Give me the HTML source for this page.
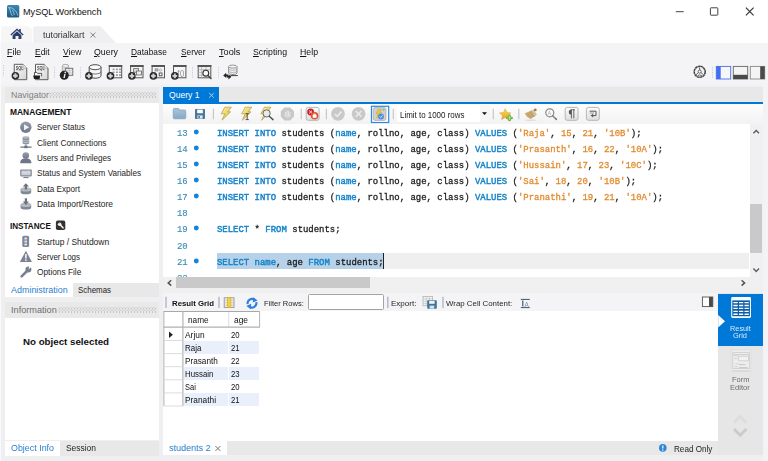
<!DOCTYPE html>
<html lang="en"><head><meta charset="utf-8"><title>MySQL Workbench</title>
<style>
*{margin:0;padding:0;box-sizing:border-box}
html,body{width:768px;height:461px;overflow:hidden;background:#efeff1}
body{position:relative;font-family:"Liberation Sans",sans-serif}
.b{position:absolute}
.t{position:absolute;white-space:pre;line-height:14px;transform-origin:0 50%}
.s{font-family:"Liberation Sans",sans-serif}
.m{font-family:"Liberation Mono",monospace}
svg{position:absolute;overflow:visible;will-change:transform}

.k{color:#1384c9;-webkit-text-stroke:0.45px}
u{text-decoration:underline;text-underline-offset:1.2px;text-decoration-thickness:0.8px}
</style></head><body>
<svg width="0" height="0" style="left:0;top:0"><defs>
<linearGradient id="gApp" x1="0" y1="0" x2="0" y2="1"><stop offset="0" stop-color="#3b88b6"/><stop offset="1" stop-color="#1a5880"/></linearGradient>
<linearGradient id="gPage" x1="0" y1="0" x2="1" y2="1"><stop offset="0" stop-color="#ffffff"/><stop offset="1" stop-color="#d4d4d4"/></linearGradient>
<linearGradient id="gBtn" x1="0" y1="0" x2="0" y2="1"><stop offset="0" stop-color="#fcfcfc"/><stop offset="1" stop-color="#dedede"/></linearGradient>
<linearGradient id="gFold" x1="0" y1="0" x2="0" y2="1"><stop offset="0" stop-color="#a9c4da"/><stop offset="1" stop-color="#86a9c6"/></linearGradient>
<linearGradient id="gBolt" x1="0" y1="0" x2="1" y2="1"><stop offset="0" stop-color="#fbf4bd"/><stop offset="0.5" stop-color="#ecd566"/><stop offset="1" stop-color="#c2a03a"/></linearGradient>
<linearGradient id="gStar" x1="0" y1="0" x2="0" y2="1"><stop offset="0" stop-color="#f6dc62"/><stop offset="1" stop-color="#e9a01e"/></linearGradient>
<linearGradient id="gGray" x1="0" y1="0" x2="0" y2="1"><stop offset="0" stop-color="#969dac"/><stop offset="1" stop-color="#70788a"/></linearGradient>
<linearGradient id="gTb" x1="0" y1="0" x2="0" y2="1"><stop offset="0" stop-color="#fdfdfd"/><stop offset="1" stop-color="#f1f1f1"/></linearGradient>
</defs></svg>
<div class="b" style="left:0px;top:0px;width:768px;height:43px;background:#fff;"></div>
<div class="b" style="left:0px;top:43px;width:768px;height:40px;background:#f4f4f6;"></div>
<div class="b" style="left:0px;top:83px;width:768px;height:5px;background:linear-gradient(#f4f4f6,#efeff1);"></div>
<div class="b" style="left:0px;top:43.5px;width:1.2px;height:418px;background:#fafafb;"></div>
<div class="b" style="left:762.8px;top:83px;width:6px;height:378px;background:#f3f3f5;"></div>
<svg style="left:7.1px;top:5.2px;" width="12.3" height="12.6" viewBox="0 0 12.3 12.6"><rect x="0" y="0" width="12.3" height="12.6" rx="1.6" fill="url(#gApp)"/><path d="M1.6 2.6 C5.5 2.2 9.3 5.2 10.8 10.2 M2.4 3.2 C3.4 5.6 3.6 8.6 5.2 10.6 M5.6 5.2 C6.6 6.6 7 8.4 7.2 9.8" fill="none" stroke="#cfe3f0" stroke-width="0.8" stroke-linecap="round" opacity="0.85"/></svg>
<span class="t s" style="left:23px;top:5.00px;font-size:9.6px;color:#111;transform:scaleX(0.9497);">MySQL Workbench</span>
<svg style="left:672px;top:4px;" width="90" height="16" viewBox="0 0 90 16"><path d="M3.8 7.7 H11.7" stroke="#444" stroke-width="1"/><rect x="38.4" y="3.8" width="7.4" height="7.4" rx="0.6" fill="none" stroke="#444" stroke-width="1"/><path d="M73.9 3.7 L81.6 11.4 M81.6 3.7 L73.9 11.4" stroke="#333" stroke-width="1.15"/></svg>
<svg style="left:0px;top:0px;" width="768" height="461" viewBox="0 0 768 461"><path d="M1.2 43 V28 Q1.2 26.3 2.9 26.3 H27.5 Q29 26.3 30 27.3 L32.2 29.6 V43 Z" fill="#f6f6f7"/><path d="M33.2 43 V28 Q33.2 26.3 34.9 26.3 H99.5 Q100.8 26.3 101.8 27.4 L116 43 Z" fill="#efeff1"/><path d="M10.4 34.6 L17 28.4 L19.2 30.4 V29 H20.8 V31.9 L23.6 34.6 L22.7 35.6 L17 30.3 L11.3 35.6 Z M12.6 35.2 L17 31.2 L21.4 35.2 V39 H18.5 V36 H15.5 V39 H12.6 Z" fill="#2b3d6b"/><path d="M90.4 32.6 L95.4 37.6 M95.4 32.6 L90.4 37.6" stroke="#777" stroke-width="0.9"/></svg>
<span class="t s" style="left:43px;top:28.00px;font-size:9.3px;color:#333;transform:scaleX(0.9561);">tutorialkart</span>
<span class="t s" style="left:7px;top:45.00px;font-size:9.6px;color:#111;transform:scaleX(0.9235);"><u>F</u>ile</span>
<span class="t s" style="left:34.5px;top:45.00px;font-size:9.6px;color:#111;transform:scaleX(0.8823);"><u>E</u>dit</span>
<span class="t s" style="left:63px;top:45.00px;font-size:9.6px;color:#111;transform:scaleX(0.8914);"><u>V</u>iew</span>
<span class="t s" style="left:94px;top:45.00px;font-size:9.6px;color:#111;transform:scaleX(0.9181);"><u>Q</u>uery</span>
<span class="t s" style="left:131.3px;top:45.00px;font-size:9.6px;color:#111;transform:scaleX(0.8715);"><u>D</u>atabase</span>
<span class="t s" style="left:180.5px;top:45.00px;font-size:9.6px;color:#111;transform:scaleX(0.8668);"><u>S</u>erver</span>
<span class="t s" style="left:219.3px;top:45.00px;font-size:9.6px;color:#111;transform:scaleX(0.9506);"><u>T</u>ools</span>
<span class="t s" style="left:253px;top:45.00px;font-size:9.6px;color:#111;transform:scaleX(0.9105);"><u>S</u>cripting</span>
<span class="t s" style="left:300px;top:45.00px;font-size:9.6px;color:#111;transform:scaleX(0.9114);"><u>H</u>elp</span>
<svg style="left:2.8px;top:65px;" width="1" height="10.5" viewBox="0 0 1 10.5"><path d="M0.5 0 V10.5" stroke="#c3cee0" stroke-width="1" stroke-dasharray="1.2 1.2"/></svg>
<svg style="left:0px;top:0px;" width="768" height="461" viewBox="0 0 768 461"><path d="M14.25 64.3 H22.95 L26.75 68.1 V79.7 H14.25 Z" fill="url(#gPage)" stroke="#5c5c5c" stroke-width="1" stroke-linejoin="round"/><path d="M22.95 64.3 V68.1 H26.75" fill="#ededed" stroke="#8a8a8a" stroke-width="0.6"/><g><text x="15.75" y="69.7" font-family="Liberation Sans, sans-serif" font-size="5.6" font-weight="700" fill="#4a4a4a" textLength="7.8" lengthAdjust="spacingAndGlyphs">SQL</text></g><path d="M15.65 70.6 H23.75" stroke="#c4c4c4" stroke-width="0.5"/><circle cx="15.4" cy="75.7" r="3.8" fill="#2a2a2a"/><path d="M13.0 75.7 H17.8 M15.4 73.3 V78.10000000000001" stroke="#cfcfcf" stroke-width="1.9"/><circle cx="15.4" cy="75.7" r="1.5" fill="#cfcfcf"/><path d="M35.5 64.3 H44.2 L48.0 68.1 V79.7 H35.5 Z" fill="url(#gPage)" stroke="#5c5c5c" stroke-width="1" stroke-linejoin="round"/><path d="M44.2 64.3 V68.1 H48.0" fill="#ededed" stroke="#8a8a8a" stroke-width="0.6"/><g><text x="37.0" y="69.7" font-family="Liberation Sans, sans-serif" font-size="5.6" font-weight="700" fill="#4a4a4a" textLength="7.8" lengthAdjust="spacingAndGlyphs">SQL</text></g><path d="M36.9 70.6 H45.0" stroke="#c4c4c4" stroke-width="0.5"/><path d="M34.5 76.4 V72.4 H36.8 L37.6 73.4 H41.6 V76.4" fill="#f4f4f4" stroke="#333" stroke-width="0.8"/><path d="M33.2 75.6 H40.2 L39.6 78.9 H34 Z" fill="#1c1c1c"/></svg>
<svg style="left:53.7px;top:66.5px;" width="1" height="12.0" viewBox="0 0 1 12.0"><path d="M0.5 0 V12.0" stroke="#c3cee0" stroke-width="1" stroke-dasharray="1.2 1.2"/></svg>
<svg style="left:0px;top:0px;" width="768" height="461" viewBox="0 0 768 461"><path d="M62.3 66 A3.2 1.6 0 0 1 68.7 66 V71 H62.3 Z" fill="#dedede" stroke="#9a9a9a" stroke-width="0.7"/><ellipse cx="65.5" cy="66" rx="3.2" ry="1.5" fill="#f0f0f0" stroke="#9a9a9a" stroke-width="0.6"/><rect x="65.6" y="68.3" width="7.2" height="7" fill="#eee" stroke="#666" stroke-width="0.9"/><path d="M65.6 70.6 H72.8 M65.6 72.9 H72.8 M69.2 68.3 V75.3" stroke="#aaa" stroke-width="0.5"/><circle cx="64.3" cy="75.2" r="4.5" fill="#242424"/><path d="M64.2 74 H65.6 L64.8 78 H63.4 Z" fill="#f0f0f0"/><circle cx="65.3" cy="72.4" r="0.85" fill="#f0f0f0"/></svg>
<svg style="left:79.7px;top:66.5px;" width="1" height="12.0" viewBox="0 0 1 12.0"><path d="M0.5 0 V12.0" stroke="#c3cee0" stroke-width="1" stroke-dasharray="1.2 1.2"/></svg>
<svg style="left:0px;top:0px;" width="768" height="461" viewBox="0 0 768 461"><path d="M89.2 67.2 V75.8 A5.9 2.4 0 0 0 101 75.8 V67.2" fill="#f6f6f6" stroke="#4a4a4a" stroke-width="1"/><ellipse cx="95.1" cy="67.2" rx="5.9" ry="2.5" fill="#fafafa" stroke="#4a4a4a" stroke-width="1"/><path d="M89.2 71.6 A5.9 2.4 0 0 0 101 71.6" fill="none" stroke="#555" stroke-width="0.8"/><circle cx="88.9" cy="75.9" r="3.8" fill="#2a2a2a"/><path d="M86.5 75.9 H91.30000000000001 M88.9 73.5 V78.30000000000001" stroke="#cfcfcf" stroke-width="1.9"/><circle cx="88.9" cy="75.9" r="1.5" fill="#cfcfcf"/><rect x="109.3" y="65.5" width="12.4" height="12.3" fill="#f6f6f6" stroke="#555" stroke-width="1"/><rect x="108.8" y="65" width="13.4" height="2" fill="#555"/><path d="M113.6 68.6 V77 M116.9 68.6 V77 M120 68.6 V77" stroke="#9a9a9a" stroke-width="1.9" stroke-dasharray="1.7 1.1"/><circle cx="110.4" cy="75.9" r="3.8" fill="#2a2a2a"/><path d="M108.0 75.9 H112.80000000000001 M110.4 73.5 V78.30000000000001" stroke="#cfcfcf" stroke-width="1.9"/><circle cx="110.4" cy="75.9" r="1.5" fill="#cfcfcf"/><rect x="130.6" y="65.5" width="12.4" height="12.3" fill="#f6f6f6" stroke="#555" stroke-width="1"/><rect x="130.1" y="65" width="13.4" height="2" fill="#555"/><rect x="133.6" y="68.6" width="5" height="3.6" fill="#ddd" stroke="#666" stroke-width="0.8"/><rect x="136.4" y="71" width="5" height="4" fill="#eee" stroke="#666" stroke-width="0.8"/><circle cx="131.9" cy="75.9" r="3.8" fill="#2a2a2a"/><path d="M129.5 75.9 H134.3 M131.9 73.5 V78.30000000000001" stroke="#cfcfcf" stroke-width="1.9"/><circle cx="131.9" cy="75.9" r="1.5" fill="#cfcfcf"/><rect x="152.1" y="65.5" width="12.4" height="12.3" fill="#f6f6f6" stroke="#555" stroke-width="1"/><rect x="151.6" y="65" width="13.4" height="2" fill="#555"/><rect x="155" y="68.8" width="3" height="2.2" fill="#bbb" stroke="#777" stroke-width="0.6"/><circle cx="160.6" cy="70" r="1.3" fill="#ddd" stroke="#999" stroke-width="0.5"/><rect x="159.2" y="73" width="2.8" height="2.8" fill="#fff" stroke="#444" stroke-width="0.9"/><circle cx="153.4" cy="75.9" r="3.8" fill="#2a2a2a"/><path d="M151.0 75.9 H155.8 M153.4 73.5 V78.30000000000001" stroke="#cfcfcf" stroke-width="1.9"/><circle cx="153.4" cy="75.9" r="1.5" fill="#cfcfcf"/><rect x="173.5" y="65.5" width="12.4" height="12.3" fill="#f6f6f6" stroke="#555" stroke-width="1"/><rect x="173.0" y="65" width="13.4" height="2" fill="#555"/><text x="177.6" y="75.4" font-family="Liberation Sans, sans-serif" font-size="6.4" fill="#888" textLength="7" lengthAdjust="spacingAndGlyphs">f()</text><circle cx="174.8" cy="75.9" r="3.8" fill="#2a2a2a"/><path d="M172.4 75.9 H177.20000000000002 M174.8 73.5 V78.30000000000001" stroke="#cfcfcf" stroke-width="1.9"/><circle cx="174.8" cy="75.9" r="1.5" fill="#cfcfcf"/></svg>
<svg style="left:191.7px;top:66.5px;" width="1" height="12.0" viewBox="0 0 1 12.0"><path d="M0.5 0 V12.0" stroke="#c3cee0" stroke-width="1" stroke-dasharray="1.2 1.2"/></svg>
<svg style="left:0px;top:0px;" width="768" height="461" viewBox="0 0 768 461"><rect x="198.2" y="65.5" width="12.6" height="12.3" fill="#f1f1f1" stroke="#555" stroke-width="1"/><rect x="197.7" y="65" width="13.6" height="2" fill="#555"/><path d="M198.2 69.6 H210.8 M198.2 72.4 H203 M198.2 75.2 H203 M201.6 67 V77.8 M206 67 V70" stroke="#aaa" stroke-width="0.7"/><circle cx="205.8" cy="73.2" r="2.9" fill="#fafafa" stroke="#333" stroke-width="1.1"/><path d="M207.9 75.4 L211 78.4" stroke="#444" stroke-width="1.4" stroke-linecap="round"/></svg>
<svg style="left:217.8px;top:66.5px;" width="1" height="12.0" viewBox="0 0 1 12.0"><path d="M0.5 0 V12.0" stroke="#c3cee0" stroke-width="1" stroke-dasharray="1.2 1.2"/></svg>
<svg style="left:0px;top:0px;" width="768" height="461" viewBox="0 0 768 461"><path d="M228.6 66.6 V73 A4.2 1.5 0 0 0 237 73 V66.6" fill="#f3f3f3" stroke="#777" stroke-width="0.8"/><ellipse cx="232.8" cy="66.6" rx="4.2" ry="1.5" fill="#fafafa" stroke="#777" stroke-width="0.8"/><path d="M228.6 68.8 A4.2 1.5 0 0 0 237 68.8 M228.6 71 A4.2 1.5 0 0 0 237 71" fill="none" stroke="#888" stroke-width="0.6"/><path d="M232.8 74.5 V75.6 M230.4 75.6 H237.8" stroke="#444" stroke-width="1"/><path d="M223.2 75.4 L226.2 72.8 V74.6 H228 V76.2 H226.2 V78 Z M231.4 76.8 L228.4 79.4 V77.6 H226.8 V76 H228.4 V74.2 Z" fill="#222"/></svg>
<svg style="left:0px;top:0px;" width="768" height="461" viewBox="0 0 768 461"><circle cx="699.7" cy="71.8" r="5.5" fill="#f2f2f2" stroke="#444" stroke-width="1.5" stroke-dasharray="2.6 0.3"/><circle cx="699.7" cy="71.6" r="1.5" fill="#fff" stroke="#555" stroke-width="0.9"/><path d="M699.7 70 V67.4 M698.4 72.6 L696 74.8 M701 72.6 L703.4 74.8 M697.6 75.6 Q699.7 74.2 701.8 75.6" fill="none" stroke="#555" stroke-width="0.9"/><rect x="716.3" y="66.4" width="14.4" height="12.6" fill="#f7f7fb" stroke="#4a6fe0" stroke-width="0.9"/><rect x="716.3" y="66.4" width="4.4" height="12.6" fill="#3f6ff0"/><rect x="733.3" y="66.4" width="14.4" height="12.6" fill="#f4f4f4" stroke="#666" stroke-width="0.9"/><rect x="733.3" y="74.8" width="14.4" height="4.2" fill="#4a4a4a"/><rect x="750.3" y="66.4" width="14.4" height="12.6" fill="#f4f4f4" stroke="#888" stroke-width="0.9"/><rect x="760.2" y="66.4" width="4.5" height="12.6" fill="#4a4a4a"/></svg>
<svg style="left:712.1px;top:66.5px;" width="1" height="11.5" viewBox="0 0 1 11.5"><path d="M0.5 0 V11.5" stroke="#c3cee0" stroke-width="1" stroke-dasharray="1.2 1.2"/></svg>
<div class="b" style="left:5.4px;top:87.3px;width:153.3px;height:15.5px;background:#e9e9e9;"></div>
<span class="t s" style="left:10.8px;top:88.00px;font-size:9.4px;color:#808080;transform:scaleX(0.9470);">Navigator</span>
<div class="b" style="left:48.9px;top:92.1px;width:106.7px;height:6.2px;background-image:radial-gradient(circle,#c4c4c4 0.55px,rgba(196,196,196,0) 0.95px),radial-gradient(circle,#c4c4c4 0.55px,rgba(196,196,196,0) 0.95px);background-size:3px 3.4px;background-position:0 0,1.5px 1.7px"></div>
<div class="b" style="left:5.4px;top:102.8px;width:153.3px;height:180.2px;background:#fff;"></div>
<span class="t s" style="left:10px;top:105.00px;font-size:8.8px;color:#111;font-weight:700;transform:scaleX(0.9573);">MANAGEMENT</span>
<span class="t s" style="left:37px;top:120.00px;font-size:9px;color:#1e1e1e;transform:scaleX(0.8802);">Server Status</span>
<span class="t s" style="left:37px;top:136.00px;font-size:9px;color:#1e1e1e;transform:scaleX(0.9200);">Client Connections</span>
<span class="t s" style="left:37px;top:151.00px;font-size:9px;color:#1e1e1e;transform:scaleX(0.8965);">Users and Privileges</span>
<span class="t s" style="left:37px;top:166.00px;font-size:9px;color:#1e1e1e;transform:scaleX(0.9052);">Status and System Variables</span>
<span class="t s" style="left:37px;top:182.00px;font-size:9px;color:#1e1e1e;transform:scaleX(0.9047);">Data Export</span>
<span class="t s" style="left:37px;top:197.00px;font-size:9px;color:#1e1e1e;transform:scaleX(0.9379);">Data Import/Restore</span>
<span class="t s" style="left:10px;top:219.00px;font-size:8.8px;color:#111;font-weight:700;transform:scaleX(0.9207);">INSTANCE</span>
<span class="t s" style="left:37px;top:235.00px;font-size:9px;color:#1e1e1e;transform:scaleX(0.9430);">Startup / Shutdown</span>
<span class="t s" style="left:37px;top:250.00px;font-size:9px;color:#1e1e1e;transform:scaleX(0.8860);">Server Logs</span>
<span class="t s" style="left:37px;top:265.00px;font-size:9px;color:#1e1e1e;transform:scaleX(0.9223);">Options File</span>
<svg style="left:0px;top:0px;" width="768" height="461" viewBox="0 0 768 461"><circle cx="25.8" cy="127.2" r="5.7" fill="url(#gGray)"/><path d="M24 124.2 L29.2 127.2 L24 130.2 Z" fill="#f4f4f4"/><path d="M22.6 137.6 V143 A3.3 1.3 0 0 0 29.2 143 V137.6 Z" fill="#868d9c"/><ellipse cx="25.9" cy="137.6" rx="3.3" ry="1.3" fill="#aeb3bd"/><path d="M22.6 139.6 A3.3 1.3 0 0 0 29.2 139.6 M22.6 141.4 A3.3 1.3 0 0 0 29.2 141.4" fill="none" stroke="#e8e8e8" stroke-width="0.6"/><path d="M25.9 144.4 V146.6 M20.4 147.2 H31.6" stroke="#6e7688" stroke-width="1.2"/><rect x="24.2" y="145.8" width="3.4" height="2.4" fill="#6e7688"/><circle cx="25.8" cy="155.6" r="3.3" fill="url(#gGray)"/><path d="M20.2 163.2 Q20.2 159.2 24 158.6 H27.6 Q31.4 159.2 31.4 163.2 Z" fill="#6e7688"/><rect x="20.2" y="169.4" width="11.6" height="7" rx="0.8" fill="#808898"/><rect x="21.4" y="170.5" width="9.2" height="4.8" fill="#c9ccd2"/><path d="M21.8 173.6 L24 172 L26 173.8 L28 171.6 L30.2 173" fill="none" stroke="#f4f4f4" stroke-width="0.6"/><path d="M23.4 177.6 H28.6" stroke="#6e7688" stroke-width="1"/><path d="M20.6 189.6 A5.3 2 0 0 1 31.2 189.6 V192.2 A5.3 2 0 0 1 20.6 192.2 Z" fill="#808898"/><ellipse cx="25.9" cy="189.6" rx="5.3" ry="2" fill="#b4b8c0"/><path d="M25.9 183.2 L29 186.6 H27 V189.6 H24.8 V186.6 H22.8 Z" fill="#6d737e"/><path d="M20.6 205 A5.3 2 0 0 1 31.2 205 V207.6 A5.3 2 0 0 1 20.6 207.6 Z" fill="#808898"/><ellipse cx="25.9" cy="205" rx="5.3" ry="2" fill="#b4b8c0"/><path d="M25.9 205 L29 201.4 H27 V198.2 H24.8 V201.4 H22.8 Z" fill="#6d737e"/><rect x="55.9" y="220.6" width="9.4" height="9.4" rx="1.8" fill="#333"/><path d="M60.6 225.2 L63 227.8" stroke="#f2f2f2" stroke-width="1.6" stroke-linecap="round"/><circle cx="59.6" cy="224.2" r="1.8" fill="#f2f2f2"/><path d="M59.4 224 L57.2 221.8 L58.8 221.4 Z" fill="#333"/><rect x="22.3" y="235.8" width="6.8" height="11.2" rx="1.5" fill="#7d8597"/><rect x="24.4" y="237.6" width="2.6" height="2" rx="0.5" fill="#dfe2e8"/><rect x="24.4" y="240.5" width="2.6" height="2" rx="0.5" fill="#dfe2e8"/><rect x="24.4" y="243.4" width="2.6" height="2" rx="0.5" fill="#dfe2e8"/><path d="M25.9 250.8 L31.7 261.4 Q32 262 31.3 262 H20.5 Q19.8 262 20.1 261.4 Z" fill="#7a8294"/><path d="M25.9 254 V258.4" stroke="#f4f4f4" stroke-width="1.6"/><circle cx="25.9" cy="260.1" r="0.9" fill="#f4f4f4"/><path d="M21.6 276.4 L27 271" stroke="#788092" stroke-width="2.6" stroke-linecap="round"/><circle cx="28.4" cy="269.6" r="3" fill="#788092"/><path d="M28.6 269.4 L32.4 265.4 L29.4 264.6 Z" fill="#fff"/></svg>
<div class="b" style="left:5.4px;top:283px;width:153.3px;height:14.3px;background:#e8e8e8;"></div>
<div class="b" style="left:5.4px;top:283px;width:67.7px;height:14.2px;background:#fff;"></div>
<span class="t s" style="left:10.8px;top:283.00px;font-size:9px;color:#2a7fd0;transform:scaleX(0.9942);">Administration</span>
<span class="t s" style="left:78.3px;top:283.00px;font-size:9px;color:#1e1e1e;transform:scaleX(0.8793);">Schemas</span>
<div class="b" style="left:5.4px;top:301.9px;width:153.3px;height:15.9px;background:#e9e9e9;"></div>
<span class="t s" style="left:10.8px;top:303.00px;font-size:9.4px;color:#6e6e6e;transform:scaleX(0.9764);">Information</span>
<div class="b" style="left:57.9px;top:306.8px;width:97.7px;height:6.2px;background-image:radial-gradient(circle,#c4c4c4 0.55px,rgba(196,196,196,0) 0.95px),radial-gradient(circle,#c4c4c4 0.55px,rgba(196,196,196,0) 0.95px);background-size:3px 3.4px;background-position:0 0,1.5px 1.7px"></div>
<div class="b" style="left:5.4px;top:317.8px;width:153.3px;height:122.7px;background:#fff;"></div>
<span class="t s" style="left:23px;top:335.00px;font-size:9.4px;color:#111;font-weight:700;transform:scaleX(1.0381);">No object selected</span>
<div class="b" style="left:5.4px;top:440.5px;width:153.3px;height:15px;background:#e8e8e8;"></div>
<div class="b" style="left:5.4px;top:440.5px;width:55px;height:15px;background:#fff;"></div>
<span class="t s" style="left:10.8px;top:441.00px;font-size:9px;color:#2a7fd0;transform:scaleX(0.9878);">Object Info</span>
<span class="t s" style="left:66px;top:441.00px;font-size:9px;color:#1e1e1e;transform:scaleX(0.9366);">Session</span>
<div class="b" style="left:163px;top:87.2px;width:599.8px;height:15px;background:#e8e8e8;"></div>
<div class="b" style="left:163px;top:87.2px;width:56.2px;height:15px;background:#0078d7;"></div>
<div class="b" style="left:163px;top:101.8px;width:599.8px;height:1.9px;background:#0078d7;"></div>
<span class="t s" style="left:169px;top:88.00px;font-size:9.6px;color:#fff;transform:scaleX(0.8963);">Query 1</span>
<svg style="left:0px;top:0px;" width="768" height="461" viewBox="0 0 768 461"><path d="M209.2 93 L213.8 97.6 M213.8 93 L209.2 97.6" stroke="#b9dcf7" stroke-width="0.9"/></svg>
<div class="b" style="left:163px;top:103.7px;width:599.8px;height:20.3px;background:linear-gradient(#fdfdfd,#f2f2f3);"></div>
<div class="b" style="left:163.4px;top:124px;width:586.6px;height:153px;background:#fff;"></div>
<div class="b" style="left:750px;top:124px;width:12.8px;height:153px;background:#f0f0f0;"></div>
<div class="b" style="left:750.4px;top:203.5px;width:11.5px;height:49.5px;background:#c9c9c9;"></div>
<svg style="left:0px;top:0px;" width="768" height="461" viewBox="0 0 768 461"><path d="M753.4 133.2 L756.2 130.4 L759 133.2 M753.4 268.6 L756.2 271.4 L759 268.6" fill="none" stroke="#5c5c5c" stroke-width="1.4"/></svg>
<div class="b" style="left:217px;top:253px;width:531.8px;height:16px;background:#efefef;"></div>
<div class="b" style="left:217px;top:253px;width:166px;height:16px;background:#b6d1e8;"></div>
<span class="t m" style="left:177.2px;top:127.00px;font-size:9.9px;color:#3a8db6;transform:scaleX(0.9065);-webkit-text-stroke:0.15px;">13</span>
<svg style="left:0px;top:0px;" width="768" height="461" viewBox="0 0 768 461"><circle cx="196.3" cy="132.0" r="2.45" fill="#1683dd"/></svg>
<span class="t m" style="left:217.2px;top:127.00px;font-size:9.9px;color:#1a1a1a;transform:scaleX(0.9068);-webkit-text-stroke:0.3px;"><span class="k">INSERT INTO</span> students (<span class="k">name</span>, rollno, age, class) <span class="k">VALUES</span> (<span style="color:#e28a2e">'Raja'</span>, <span style="color:#e28a2e">15</span>, <span style="color:#e28a2e">21</span>, <span style="color:#e28a2e">'10B'</span>);</span>
<span class="t m" style="left:177.2px;top:143.00px;font-size:9.9px;color:#3a8db6;transform:scaleX(0.9065);-webkit-text-stroke:0.15px;">14</span>
<svg style="left:0px;top:0px;" width="768" height="461" viewBox="0 0 768 461"><circle cx="196.3" cy="148.0" r="2.45" fill="#1683dd"/></svg>
<span class="t m" style="left:217.2px;top:143.00px;font-size:9.9px;color:#1a1a1a;transform:scaleX(0.9068);-webkit-text-stroke:0.3px;"><span class="k">INSERT INTO</span> students (<span class="k">name</span>, rollno, age, class) <span class="k">VALUES</span> (<span style="color:#e28a2e">'Prasanth'</span>, <span style="color:#e28a2e">16</span>, <span style="color:#e28a2e">22</span>, <span style="color:#e28a2e">'10A'</span>);</span>
<span class="t m" style="left:177.2px;top:159.00px;font-size:9.9px;color:#3a8db6;transform:scaleX(0.9065);-webkit-text-stroke:0.15px;">15</span>
<svg style="left:0px;top:0px;" width="768" height="461" viewBox="0 0 768 461"><circle cx="196.3" cy="164.0" r="2.45" fill="#1683dd"/></svg>
<span class="t m" style="left:217.2px;top:159.00px;font-size:9.9px;color:#1a1a1a;transform:scaleX(0.9068);-webkit-text-stroke:0.3px;"><span class="k">INSERT INTO</span> students (<span class="k">name</span>, rollno, age, class) <span class="k">VALUES</span> (<span style="color:#e28a2e">'Hussain'</span>, <span style="color:#e28a2e">17</span>, <span style="color:#e28a2e">23</span>, <span style="color:#e28a2e">'10C'</span>);</span>
<span class="t m" style="left:177.2px;top:175.00px;font-size:9.9px;color:#3a8db6;transform:scaleX(0.9065);-webkit-text-stroke:0.15px;">16</span>
<svg style="left:0px;top:0px;" width="768" height="461" viewBox="0 0 768 461"><circle cx="196.3" cy="180.0" r="2.45" fill="#1683dd"/></svg>
<span class="t m" style="left:217.2px;top:175.00px;font-size:9.9px;color:#1a1a1a;transform:scaleX(0.9068);-webkit-text-stroke:0.3px;"><span class="k">INSERT INTO</span> students (<span class="k">name</span>, rollno, age, class) <span class="k">VALUES</span> (<span style="color:#e28a2e">'Sai'</span>, <span style="color:#e28a2e">18</span>, <span style="color:#e28a2e">20</span>, <span style="color:#e28a2e">'10B'</span>);</span>
<span class="t m" style="left:177.2px;top:191.00px;font-size:9.9px;color:#3a8db6;transform:scaleX(0.9065);-webkit-text-stroke:0.15px;">17</span>
<svg style="left:0px;top:0px;" width="768" height="461" viewBox="0 0 768 461"><circle cx="196.3" cy="196.0" r="2.45" fill="#1683dd"/></svg>
<span class="t m" style="left:217.2px;top:191.00px;font-size:9.9px;color:#1a1a1a;transform:scaleX(0.9068);-webkit-text-stroke:0.3px;"><span class="k">INSERT INTO</span> students (<span class="k">name</span>, rollno, age, class) <span class="k">VALUES</span> (<span style="color:#e28a2e">'Pranathi'</span>, <span style="color:#e28a2e">19</span>, <span style="color:#e28a2e">21</span>, <span style="color:#e28a2e">'10A'</span>);</span>
<span class="t m" style="left:177.2px;top:207.00px;font-size:9.9px;color:#3a8db6;transform:scaleX(0.9065);-webkit-text-stroke:0.15px;">18</span>
<span class="t m" style="left:177.2px;top:223.00px;font-size:9.9px;color:#3a8db6;transform:scaleX(0.9065);-webkit-text-stroke:0.15px;">19</span>
<svg style="left:0px;top:0px;" width="768" height="461" viewBox="0 0 768 461"><circle cx="196.3" cy="228.0" r="2.45" fill="#1683dd"/></svg>
<span class="t m" style="left:217.2px;top:223.00px;font-size:9.9px;color:#1a1a1a;transform:scaleX(0.9068);-webkit-text-stroke:0.3px;"><span class="k">SELECT</span> * <span class="k">FROM</span> students;</span>
<span class="t m" style="left:177.2px;top:240.00px;font-size:9.9px;color:#3a8db6;transform:scaleX(0.9065);-webkit-text-stroke:0.15px;">20</span>
<span class="t m" style="left:177.2px;top:256.00px;font-size:9.9px;color:#3a8db6;transform:scaleX(0.9065);-webkit-text-stroke:0.15px;">21</span>
<svg style="left:0px;top:0px;" width="768" height="461" viewBox="0 0 768 461"><circle cx="196.3" cy="261.0" r="2.45" fill="#1683dd"/></svg>
<span class="t m" style="left:217.2px;top:256.00px;font-size:9.9px;color:#1a1a1a;transform:scaleX(0.9069);-webkit-text-stroke:0.3px;"><span class="k">SELECT name</span>, age <span class="k">FROM</span> students;</span>
<span class="t m" style="left:177.2px;top:272.00px;font-size:9.9px;color:#3a8db6;transform:scaleX(0.9065);-webkit-text-stroke:0.15px;">22</span>
<div class="b" style="left:382.9px;top:253px;width:1.2px;height:16px;background:#222;"></div>
<div class="b" style="left:163px;top:277px;width:599.8px;height:15.6px;background:#f0f0f0;"></div>
<div class="b" style="left:176.4px;top:277px;width:194px;height:10.8px;background:#c9c9c9;"></div>
<svg style="left:0px;top:0px;" width="768" height="461" viewBox="0 0 768 461"><path d="M171.2 280.2 L168.2 282.9 L171.2 285.6 M741.6 280.2 L744.6 282.9 L741.6 285.6" fill="none" stroke="#555" stroke-width="1.5"/></svg>
<svg style="left:0px;top:0px;" width="768" height="461" viewBox="0 0 768 461"><path d="M173.2 109.8 Q173.2 108.4 174.6 108.4 H178 Q178.8 108.4 179.2 109.2 L179.6 110 H184.6 Q185.8 110 185.8 111.2 V117.6 Q185.8 118.8 184.6 118.8 H174.4 Q173.2 118.8 173.2 117.6 Z" fill="url(#gFold)" stroke="#7d9db8" stroke-width="0.7"/><rect x="195" y="109" width="10" height="10" rx="0.8" fill="#4a789d"/><rect x="197.2" y="109.6" width="5.6" height="3.6" fill="#fff"/><rect x="197.4" y="115.4" width="5.2" height="3.2" fill="#dfe8ef"/><rect x="198.4" y="116" width="1.6" height="2.2" fill="#4f80a6"/><path d="M213.4 108.8 V119.2" stroke="#c8c8c8" stroke-width="1.2"/><path d="M224.79999999999998 107.2 H231.39999999999998 L227.79999999999998 111.8 H230.6 L222.0 120.2 L224.79999999999998 113.8 H221.2 Z" fill="url(#gBolt)" stroke="#b39a3c" stroke-width="0.7" stroke-linejoin="round"/><path d="M245.2 107.2 H251.79999999999998 L248.2 111.8 H251.0 L242.4 120.2 L245.2 113.8 H241.6 Z" fill="url(#gBolt)" stroke="#b39a3c" stroke-width="0.7" stroke-linejoin="round"/><path d="M245.6 113.6 H248.8 M247.2 113.6 V119.4 M245.6 119.6 H248.8" stroke="#555" stroke-width="1"/><path d="M264.40000000000003 107.2 H271.0 L267.40000000000003 111.8 H270.2 L261.6 120.2 L264.40000000000003 113.8 H260.8 Z" fill="url(#gBolt)" stroke="#b39a3c" stroke-width="0.7" stroke-linejoin="round"/><circle cx="266.6" cy="113.4" r="3.6" fill="#e6eef8" fill-opacity="0.9" stroke="#666" stroke-width="1"/><path d="M269.2 116.2 L273 119.6" stroke="#555" stroke-width="1.5" stroke-linecap="round"/><path d="M284.4 107.4 H290.2 L294 111.2 V116.6 L290.2 120.4 H284.4 L280.8 116.6 V111.2 Z" fill="#c8c8c8"/><path d="M285.4 116.6 V112 M286.9 116 V110.6 M288.4 116 V110.8 M289.9 116.6 V112 M285 115 Q287.6 119.4 290.4 115" stroke="#e4e4e4" stroke-width="1.1" fill="none"/><path d="M301.3 108.8 V119.2" stroke="#c8c8c8" stroke-width="1.2"/><rect x="306.2" y="107.4" width="12.9" height="12.9" rx="2" fill="url(#gBtn)" stroke="#b0b0b0" stroke-width="0.9"/><circle cx="310.6" cy="112" r="3.4" fill="#cf2027"/><path d="M309.2 110.6 L312 113.4 M312 110.6 L309.2 113.4" stroke="#fff" stroke-width="0.9"/><circle cx="314.6" cy="115.8" r="3.8" fill="#e5512d"/><path d="M313 115 H316.2 V117.6 H313 Z M313.6 115 V113.8 M314.6 115 V113.4 M315.6 115 V113.8" fill="#fff" stroke="#fff" stroke-width="0.7"/><path d="M326.4 108.8 V119.2" stroke="#c8c8c8" stroke-width="1.2"/><circle cx="338" cy="113.8" r="6.9" fill="#c9c9c9"/><path d="M334.8 114 L337.2 116.4 L341.4 111.6" fill="none" stroke="#eaeaea" stroke-width="1.6"/><circle cx="358.6" cy="113.8" r="6.9" fill="#c9c9c9"/><path d="M355.8 111 L361.4 116.6 M361.4 111 L355.8 116.6" stroke="#eaeaea" stroke-width="1.6"/><rect x="371.5" y="106.3" width="17.2" height="16.2" fill="#fff" stroke="#2a8be6" stroke-width="1.2"/><rect x="373.2" y="107.6" width="12.8" height="12.8" rx="1.8" fill="#d0d0d0" stroke="#a8a8a8" stroke-width="0.7"/><path d="M378 109.4 H381.6 L379.8 112.4 H381.4 L376.6 118.2 L378 113.8 H376.2 Z" fill="#eec63a" stroke="#c59d22" stroke-width="0.4"/><circle cx="381" cy="116.4" r="3" fill="#4f8fe0"/><path d="M379.6 116.4 L380.8 117.6 L382.6 115.4" fill="none" stroke="#e8f0fb" stroke-width="0.8"/><circle cx="383.6" cy="109.8" r="1" fill="#7ac46a"/><path d="M393.3 108.8 V119.2" stroke="#c8c8c8" stroke-width="1.2"/></svg>
<div class="b" style="left:396.6px;top:105.4px;width:93.2px;height:16.8px;background:#fff;"></div>
<div class="b" style="left:480px;top:105.4px;width:9.8px;height:16.8px;background:#f6f6f6;"></div>
<svg style="left:0px;top:0px;" width="768" height="461" viewBox="0 0 768 461"><path d="M482 112.2 H487 L484.5 114.9 Z" fill="#111"/></svg>
<span class="t s" style="left:400px;top:108.00px;font-size:9.8px;color:#1a1a1a;transform:scaleX(0.8101);">Limit to 1000 rows</span>
<svg style="left:0px;top:0px;" width="768" height="461" viewBox="0 0 768 461"><path d="M493.3 108.8 V119.2" stroke="#c8c8c8" stroke-width="1.2"/><path d="M505.2 108.7 L506.9 112.5 L510.9 112.9 L507.9 115.6 L508.8 119.5 L505.2 117.5 L501.6 119.5 L502.5 115.6 L499.5 112.9 L503.5 112.5 Z" fill="url(#gStar)" stroke="#d9a42a" stroke-width="0.5" stroke-linejoin="round"/><path d="M507.4 117.9 H511.6 M509.5 115.8 V120" stroke="#62a63a" stroke-width="2.5" stroke-linecap="round"/><path d="M507.8 117.9 H511.2 M509.5 116.2 V119.6" stroke="#b4df8c" stroke-width="1" stroke-linecap="round"/><path d="M518.8 108.8 V119.2" stroke="#c8c8c8" stroke-width="1.2"/><path d="M524.6 113.4 L531.9 110.3 L535.5 116 L530.6 118.9 Q526.4 117 524.6 113.4 Z" fill="#cdab70"/><path d="M527.2 113.4 L531.4 117.8 M529.6 112.2 L533.6 116.6" stroke="#ad8a50" stroke-width="0.6"/><path d="M531.9 110.3 L533.5 109.5 L536.9 114.6 L535.5 116 Z" fill="#c8c0ae"/><circle cx="535.3" cy="109.9" r="1.35" fill="#a9792e"/><ellipse cx="530.6" cy="120.2" rx="6" ry="0.6" fill="#d8d8d8"/><circle cx="549.8" cy="112.8" r="4" fill="#f8f8f8" stroke="#8a8a8a" stroke-width="1.2"/><text x="547.7" y="114.8" font-family="Liberation Sans, sans-serif" font-size="5" fill="#aaa">A</text><path d="M552.6 115.8 L556.4 119.4" stroke="#777" stroke-width="1.5" stroke-linecap="round"/><path d="M553.4 116.4 L555 118" stroke="#c9a36a" stroke-width="0.8"/><rect x="565.2" y="107.4" width="12.9" height="12.9" rx="2" fill="url(#gBtn)" stroke="#b0b0b0" stroke-width="0.9"/><path d="M571.4 109.8 V118.4 M573.8 109.8 V118.4 M571 109.8 H575" stroke="#555" stroke-width="0.9"/><path d="M571.4 109.4 A2.6 2.6 0 0 0 571.4 114.6 Z" fill="#555"/><rect x="586.4" y="107.4" width="12.9" height="12.9" rx="2" fill="url(#gBtn)" stroke="#b0b0b0" stroke-width="0.9"/><path d="M589.6 111.2 H596 V115.6 H592.6" fill="none" stroke="#555" stroke-width="1"/><path d="M590.6 115.6 L593.2 113.8 V117.4 Z" fill="#555"/><path d="M589.6 113 H594" stroke="#888" stroke-width="0.8"/></svg>
<div class="b" style="left:163px;top:292.6px;width:555.2px;height:19px;background:#f4f4f6;"></div>
<div class="b" style="left:163.4px;top:311.4px;width:554.8px;height:129.4px;background:#fff;"></div>
<div class="b" style="left:163px;top:440.8px;width:555.2px;height:14.6px;background:#e8e8e8;"></div>
<div class="b" style="left:163px;top:440.8px;width:64.4px;height:14.6px;background:#fff;"></div>
<span class="t s" style="left:169px;top:441.00px;font-size:9px;color:#2a7fd0;">students 2</span>
<svg style="left:0px;top:0px;" width="768" height="461" viewBox="0 0 768 461"><path d="M215.4 446 L220.4 451 M220.4 446 L215.4 451" stroke="#666" stroke-width="0.9"/></svg>
<span class="t s" style="left:674px;top:442.00px;font-size:9.2px;color:#1e1e1e;transform:scaleX(0.8843);">Read Only</span>
<svg style="left:0px;top:0px;" width="768" height="461" viewBox="0 0 768 461"><circle cx="662.8" cy="447.9" r="3.8" fill="#2f86d8"/><path d="M662.8 445.5 V448.5" stroke="#fff" stroke-width="1.2"/><circle cx="662.8" cy="450" r="0.7" fill="#fff"/></svg>
<div class="b" style="left:718.2px;top:292.6px;width:44.6px;height:162.8px;background:#e6e6e6;"></div>
<div class="b" style="left:718.2px;top:293.6px;width:44.6px;height:52.2px;background:#0078d7;"></div>
<svg style="left:0px;top:0px;" width="768" height="461" viewBox="0 0 768 461"><path d="M718.2 315 L725 321.3 L718.2 327.6 Z" fill="#fff"/><rect x="731.2" y="297" width="19.8" height="21" rx="1.4" fill="#fdfdfd"/><rect x="732.3" y="300.4" width="17.6" height="15.8" fill="#0a5ea8"/><path d="M733.4 302.6 H748.8 M733.4 305.5 H748.8 M733.4 308.4 H748.8 M733.4 311.3 H748.8 M733.4 314.2 H748.8" stroke="#ffffff" stroke-width="1.35" stroke-dasharray="4.3 1.25"/><rect x="731.2" y="350" width="19.8" height="20.6" rx="1.2" fill="#ededed" stroke="#dadada" stroke-width="0.7"/><path d="M732 371 H750.4" stroke="#d0d0d0" stroke-width="0.9"/><rect x="732.8" y="352.4" width="16.6" height="16.2" fill="none" stroke="#cccccc" stroke-width="0.8"/><path d="M733 354.6 H749" stroke="#c6c6c6" stroke-width="0.8"/><rect x="738.8" y="356.2" width="9.6" height="4.6" fill="#f2f2f2" stroke="#c8c8c8" stroke-width="0.7"/><path d="M734.2 355.8 H738 M734.2 358.6 H737.4 M735.6 363.8 H738.8 M734.2 366.6 H738" stroke="#c8c8c8" stroke-width="0.7"/><path d="M739 364.6 H745.6 M739 367.6 H747.6" stroke="#c4c4c4" stroke-width="0.9"/><path d="M734 422.8 L740.2 416.6 L746.4 422.8" fill="none" stroke="#dddddd" stroke-width="2.9"/><path d="M734 429 L740.2 435.2 L746.4 429" fill="none" stroke="#cbcbcb" stroke-width="2.9"/></svg>
<span class="t s" style="left:729.8px;top:322.00px;font-size:8px;color:#d9e9f8;transform:scaleX(0.9168);">Result</span>
<span class="t s" style="left:733.3px;top:329.00px;font-size:8px;color:#d9e9f8;transform:scaleX(0.9256);">Grid</span>
<span class="t s" style="left:731.6px;top:373.00px;font-size:8px;color:#6c6c6c;transform:scaleX(0.9319);">Form</span>
<span class="t s" style="left:730.2px;top:381.00px;font-size:8px;color:#6c6c6c;transform:scaleX(0.9471);">Editor</span>
<svg style="left:0px;top:0px;" width="768" height="461" viewBox="0 0 768 461"><path d="M166 296.8 V308" stroke="#b4c0d2" stroke-width="1.6"/><path d="M219 296.8 V308" stroke="#b4c0d2" stroke-width="1.6"/><rect x="224.2" y="297.8" width="9.8" height="9.8" fill="#f0f0f0" stroke="#8a8a8a" stroke-width="0.8"/><path d="M224.2 300.2 H234 M224.2 302.7 H234 M224.2 305.2 H234" stroke="#b0b0b0" stroke-width="0.6"/><rect x="227.3" y="297.8" width="3.6" height="9.8" fill="#f6d33c" stroke="#d6a81e" stroke-width="0.6"/><path d="M247.6 304.2 A4.6 4.6 0 0 1 254.6 299.6" fill="none" stroke="#2f7fe3" stroke-width="2.1"/><path d="M253.2 297.2 L257.6 300.4 L252.8 302.6 Z" fill="#2f7fe3"/><path d="M256.4 302.2 A4.6 4.6 0 0 1 249.4 306.8" fill="none" stroke="#2f7fe3" stroke-width="2.1"/><path d="M250.8 309.2 L246.4 306 L251.2 303.8 Z" fill="#2f7fe3"/><path d="M387.8 296.8 V308" stroke="#b4c0d2" stroke-width="1.6"/><rect x="423" y="296.4" width="9.6" height="9.4" fill="#f4f4f4" stroke="#aaa" stroke-width="0.7"/><path d="M423 298.8 H432.6 M423 301.2 H432.6 M423 303.6 H432.6 M426.2 296.4 V305.8 M429.4 296.4 V305.8" stroke="#bdbdbd" stroke-width="0.6"/><rect x="427.2" y="300.2" width="9.6" height="8.6" rx="0.8" fill="#41749b"/><rect x="429.2" y="300.8" width="5.4" height="3" fill="#eef3f7"/><rect x="429.6" y="305.6" width="4.6" height="3" fill="#d9e3ea"/><path d="M443 296.8 V308" stroke="#b4c0d2" stroke-width="1.6"/><path d="M520.8 299.4 H529.8 M520.8 307.6 H529.8" stroke="#44546e" stroke-width="1"/><path d="M522.8 300.6 V306.6" stroke="#44546e" stroke-width="1.2"/><text x="524.6" y="306.6" font-family="Liberation Sans, sans-serif" font-size="6.4" fill="#7d8aa0">A</text><rect x="702.4" y="297" width="10.4" height="9.6" fill="#fdfdfd" stroke="#555" stroke-width="0.9"/><rect x="709" y="297" width="3.8" height="9.6" fill="#4a4a4a"/></svg>
<span class="t s" style="left:172px;top:297.00px;font-size:7.9px;color:#111;font-weight:700;transform:scaleX(0.9875);">Result Grid</span>
<span class="t s" style="left:264px;top:297.00px;font-size:7.6px;color:#1e1e1e;transform:scaleX(0.9927);">Filter Rows:</span>
<span class="t s" style="left:391.4px;top:297.00px;font-size:7.6px;color:#1e1e1e;transform:scaleX(1.0556);">Export:</span>
<span class="t s" style="left:446.4px;top:297.00px;font-size:7.6px;color:#1e1e1e;transform:scaleX(1.0357);">Wrap Cell Content:</span>
<div class="b" style="left:307.6px;top:294.2px;width:76.7px;height:15.6px;background:#fff;border:1.2px solid #a4a4a4;border-radius:1.5px"></div>
<div class="b" style="left:184px;top:340.5px;width:44.2px;height:13.1px;background:#e9f0fb;"></div>
<div class="b" style="left:229.2px;top:340.5px;width:30.2px;height:13.1px;background:#e9f0fb;"></div>
<div class="b" style="left:184px;top:366.7px;width:44.2px;height:13.1px;background:#e9f0fb;"></div>
<div class="b" style="left:229.2px;top:366.7px;width:30.2px;height:13.1px;background:#e9f0fb;"></div>
<div class="b" style="left:184px;top:392.9px;width:44.2px;height:13.1px;background:#e9f0fb;"></div>
<div class="b" style="left:229.2px;top:392.9px;width:30.2px;height:13.1px;background:#e9f0fb;"></div>
<svg style="left:0px;top:0px;" width="768" height="461" viewBox="0 0 768 461"><path d="M163.5 311.5 H259.8" stroke="#a8a8a8" stroke-width="1"/><path d="M163.9 311.4 V406" stroke="#b0b0b0" stroke-width="1"/><path d="M182.9 311.4 V406" stroke="#b4b4b4" stroke-width="1.2"/><path d="M228.7 312 V327" stroke="#dadada" stroke-width="0.9"/><path d="M259.6 312 V327.4" stroke="#b4b4b4" stroke-width="1"/><path d="M163.5 327.2 H259.8" stroke="#b0b0b0" stroke-width="1.2"/><path d="M164 340.5 H182.7" stroke="#d8d8d8" stroke-width="0.9"/><path d="M164 353.6 H182.7" stroke="#d8d8d8" stroke-width="0.9"/><path d="M164 366.7 H182.7" stroke="#d8d8d8" stroke-width="0.9"/><path d="M164 379.8 H182.7" stroke="#d8d8d8" stroke-width="0.9"/><path d="M164 392.9 H182.7" stroke="#d8d8d8" stroke-width="0.9"/><path d="M164 406.0 H182.7" stroke="#d8d8d8" stroke-width="0.9"/><path d="M169 331.6 L172.9 334.8 L169 338 Z" fill="#222"/></svg>
<span class="t s" style="left:188px;top:313.00px;font-size:9px;color:#111;transform:scaleX(0.9149);">name</span>
<span class="t s" style="left:234.2px;top:313.00px;font-size:9px;color:#111;transform:scaleX(0.9314);">age</span>
<span class="t s" style="left:185.2px;top:328.00px;font-size:9px;color:#111;transform:scaleX(0.9326);">Arjun</span>
<span class="t s" style="left:231.4px;top:328.00px;font-size:9px;color:#111;transform:scaleX(0.8587);">20</span>
<span class="t s" style="left:185.2px;top:341.00px;font-size:9px;color:#111;transform:scaleX(0.8857);">Raja</span>
<span class="t s" style="left:231.4px;top:341.00px;font-size:9px;color:#111;transform:scaleX(0.8587);">21</span>
<span class="t s" style="left:185.2px;top:354.00px;font-size:9px;color:#111;transform:scaleX(0.9103);">Prasanth</span>
<span class="t s" style="left:231.4px;top:354.00px;font-size:9px;color:#111;transform:scaleX(0.8587);">22</span>
<span class="t s" style="left:185.2px;top:367.00px;font-size:9px;color:#111;transform:scaleX(0.8734);">Hussain</span>
<span class="t s" style="left:231.4px;top:367.00px;font-size:9px;color:#111;transform:scaleX(0.8587);">23</span>
<span class="t s" style="left:185.2px;top:380.00px;font-size:9px;color:#111;transform:scaleX(0.8298);">Sai</span>
<span class="t s" style="left:231.4px;top:380.00px;font-size:9px;color:#111;transform:scaleX(0.8587);">20</span>
<span class="t s" style="left:185.2px;top:393.00px;font-size:9px;color:#111;transform:scaleX(0.9245);">Pranathi</span>
<span class="t s" style="left:231.4px;top:393.00px;font-size:9px;color:#111;transform:scaleX(0.8587);">21</span>
</body></html>
